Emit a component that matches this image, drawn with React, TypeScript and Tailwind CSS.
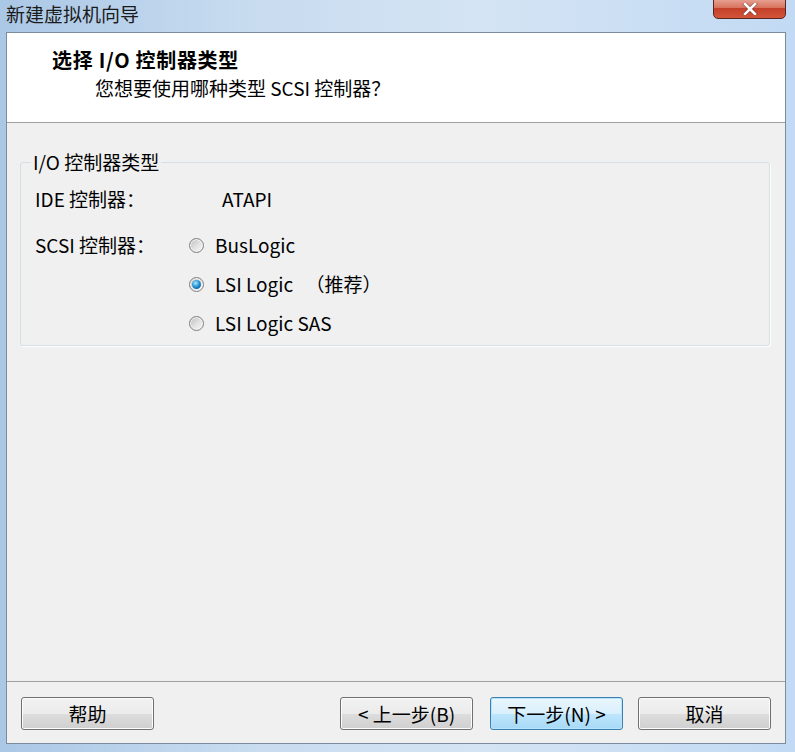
import React from "react";

function Radio({ checked, label }: { checked?: boolean; label: React.ReactNode }) {
  return (
    <div className="flex items-center h-[24px]">
      <span className="w-[15px] h-[15px] rounded-full border border-[#7f8081] bg-[linear-gradient(135deg,#bdbdbd,#e3e3e3_55%,#fafafa)] shadow-[inset_0_0_0_1px_#f4f4f4] flex items-center justify-center shrink-0 ml-[-1px]">
        {checked && (
          <span className="w-[9px] h-[9px] rounded-full bg-[radial-gradient(circle_at_40%_35%,#a6ecff,#1f8ad0_50%,#0a4a7e)]" />
        )}
      </span>
      <span className="ml-[11px]">{label}</span>
    </div>
  );
}

function Button({ children, focused }: { children: React.ReactNode; focused?: boolean }) {
  return (
    <div
      className={
        focused
          ? "w-[133px] h-[33px] pt-[2px] rounded-[3px] border border-[#3c7fb1] shadow-[inset_0_0_0_1px_#b6e4fc] bg-[linear-gradient(#eaf6fd,#d9f0fc_50%,#bee6fd_51%,#a7d9f5)] flex items-center justify-center"
          : "w-[133px] h-[33px] pt-[2px] rounded-[3px] border border-[#707070] shadow-[inset_0_0_0_1px_#fcfcfc] bg-[linear-gradient(#f2f2f2,#ebebeb_50%,#dddddd_51%,#cfcfcf)] flex items-center justify-center"
      }
    >
      {children}
    </div>
  );
}

export default function App() {
  return (
    <div className="w-[795px] h-[752px] flex flex-col overflow-hidden bg-[linear-gradient(90deg,#aac7e6,#c7dbef_30%,#d4e4f4_60%,#c2daf3)] font-['Microsoft_YaHei','Noto_Sans_CJK_SC',sans-serif] text-[19px] text-black">
      <div className="relative h-[32px] shrink-0">
        <div className="pl-[6px] pt-[1px] leading-[26px] text-[#1b1b1b]">新建虚拟机向导</div>
        <div className="absolute left-[713px] top-[-2px] w-[73px] h-[21px] rounded-b-[5px] border border-[#5b2620] bg-[linear-gradient(#e8a597,#d9745f_45%,#c4402a_50%,#d2553a)] flex items-center justify-center">
          <svg width="16" height="12" viewBox="0 0 16 12">
            <path d="M3 1 L13 11 M13 1 L3 11" stroke="#3a1a16" strokeWidth="4" strokeLinecap="square" opacity="0.45" />
            <path d="M3 1 L13 11 M13 1 L3 11" stroke="#ffffff" strokeWidth="2.6" strokeLinecap="square" />
          </svg>
        </div>
      </div>
      <div className="flex-1 ml-[6px] mr-[9px] mb-[8px] border border-[#7d8c9c] bg-[#f0f0f0] flex flex-col">
        <div className="h-[90px] shrink-0 bg-white border-b border-[#a0a0a0] pl-[45px] pt-[13px]">
          <div className="font-bold text-[20px] tracking-[0.7px] leading-[27px]">选择 I/O 控制器类型</div>
          <div className="pl-[43px] leading-[26px] mt-[2px]">您想要使用哪种类型 SCSI 控制器？</div>
        </div>
        <div className="flex-1 pl-[13px] pr-[15px] pt-[27px]">
          <fieldset className="border border-[#d5dfe5] rounded-[3px] px-[10px] pb-[10px] shadow-[1px_1px_0_#ffffff]">
            <legend className="px-[2px] leading-[24px]">I/O 控制器类型</legend>
            <div className="pl-[4px]">
              <div className="flex h-[24px] items-center mt-[13px]">
                <div className="w-[155px]">IDE 控制器：</div>
                <div className="pl-[32px]">ATAPI</div>
              </div>
              <div className="flex mt-[22px]">
                <div className="w-[155px] leading-[24px]">SCSI 控制器：</div>
                <div className="flex flex-col gap-[15px]">
                  <Radio label="BusLogic" />
                  <Radio checked label={<span>LSI Logic <span className="ml-[8px]">（推荐）</span></span>} />
                  <Radio label="LSI Logic SAS" />
                </div>
              </div>
            </div>
          </fieldset>
        </div>
        <div className="h-[62px] shrink-0 border-t border-[#a0a0a0] flex items-start pt-[15px] pl-[14px] pr-[14px]">
          <Button>帮助</Button>
          <div className="flex-1" />
          <Button>&lt; 上一步(B)</Button>
          <div className="w-[17px]" />
          <Button focused>下一步(N) &gt;</Button>
          <div className="w-[15px]" />
          <Button>取消</Button>
        </div>
      </div>
    </div>
  );
}
